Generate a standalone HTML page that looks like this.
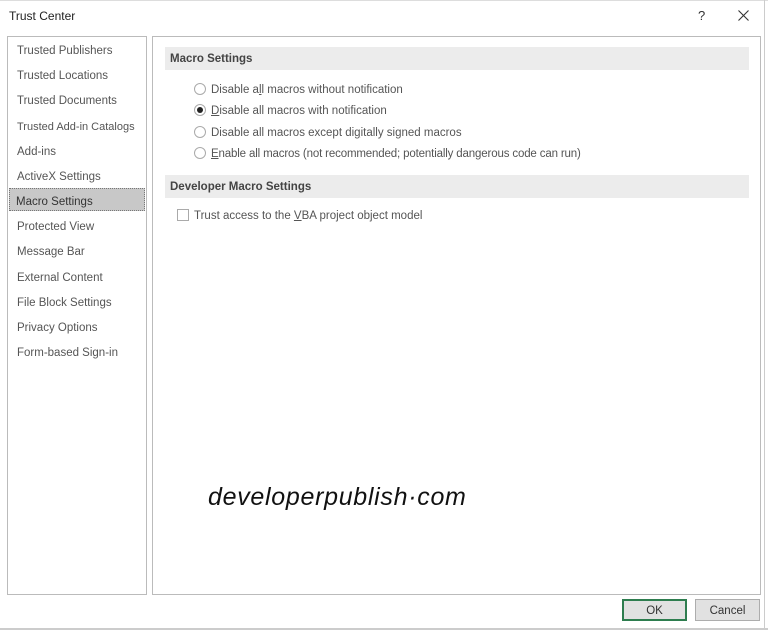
<!DOCTYPE html>
<html><head><style>
*{margin:0;padding:0;box-sizing:border-box}
body{width:768px;height:630px;background:#fff;font-family:"Liberation Sans",sans-serif;font-size:11.5px;color:#444;position:relative;overflow:hidden;white-space:nowrap}
.a{position:absolute}
.title{left:9px;top:9px;font-size:12px;color:#222}
.left{left:7px;top:36px;width:140px;height:559px;border:1px solid #bbb}
.right{left:152px;top:36px;width:609px;height:559px;border:1px solid #bbb}
.item{position:absolute;left:9px;font-size:11.5px;color:#555;margin-top:2px}
.sel{position:absolute;left:1px;top:151px;width:136px;height:23px;background:#c8c8c8;border:1px dotted #777}
.hdr{position:absolute;left:12px;width:584px;height:23px;background:#ececec;font-weight:bold;color:#444;padding:6px 0 0 5px;font-size:11.5px}
.rad{position:absolute;left:41px;width:12px;height:12px;border:1px solid #aaa;border-radius:50%;background:#fff}
.rt{position:absolute;left:58px;color:#555;font-size:11.5px;margin-top:1px}
.btn{position:absolute;top:599px;height:22px;background:#e1e1e1;border:1px solid #adadad;text-align:center;padding-top:5px;color:#333}
</style></head><body>
<div class="a" style="left:0;top:0;width:768px;height:1px;background:#ddd"></div>
<div class="a" style="left:764px;top:0;width:1px;height:630px;background:#ccc"></div>
<div class="a" style="left:0;top:628px;width:768px;height:2px;background:#ccc"></div>
<div class="a title">Trust Center</div>
<div class="a" style="left:698px;top:8px;font-size:13px;color:#333">?</div>
<svg class="a" style="left:738px;top:10px" width="11" height="11"><path d="M0.5 0.5L10.5 10.5M10.5 0.5L0.5 10.5" stroke="#333" stroke-width="1.1"/></svg>
<div class="a left">
<div class="sel"></div>
<div class="item" style="top:6px">Trusted Publishers</div>
<div class="item" style="top:31px">Trusted Locations</div>
<div class="item" style="top:56px">Trusted Documents</div>
<div class="item" style="top:82px;font-size:11px">Trusted Add-in Catalogs</div>
<div class="item" style="top:107px">Add-ins</div>
<div class="item" style="top:132px">ActiveX Settings</div>
<div class="item" style="top:157px;left:8px;color:#333">Macro Settings</div>
<div class="item" style="top:182px">Protected View</div>
<div class="item" style="top:207px">Message Bar</div>
<div class="item" style="top:233px">External Content</div>
<div class="item" style="top:258px">File Block Settings</div>
<div class="item" style="top:283px">Privacy Options</div>
<div class="item" style="top:308px">Form-based Sign-in</div>
</div>
<div class="a right">
<div class="hdr" style="top:10px">Macro Settings</div>
<div class="rad" style="top:46px"></div><div class="rt" style="top:46px">Disable a<u>l</u>l macros without notification</div>
<div class="rad" style="top:67px"><div style="position:absolute;left:2px;top:2px;width:6px;height:6px;border-radius:50%;background:#222"></div></div><div class="rt" style="top:67px"><u>D</u>isable all macros with notification</div>
<div class="rad" style="top:89px"></div><div class="rt" style="top:89px">Disable all macros except di<u>g</u>itally signed macros</div>
<div class="rad" style="top:110px"></div><div class="rt" style="top:110px;letter-spacing:-0.15px"><u>E</u>nable all macros (not recommended; potentially dangerous code can run)</div>
<div class="hdr" style="top:138px">Developer Macro Settings</div>
<div style="position:absolute;left:24px;top:172px;width:12px;height:12px;border:1px solid #aaa"></div>
<div class="rt" style="left:41px;top:172px">Trust access to the <u>V</u>BA project object model</div>
<div style="position:absolute;left:55px;top:446px;font-size:25px;font-style:italic;color:#111;letter-spacing:0.7px">developerpublish·com</div>
</div>
<div class="btn" style="left:622px;width:65px;border:2px solid #2e7d4f;padding-top:4px">OK</div>
<div class="btn" style="left:695px;width:65px">Cancel</div>
</body></html>
